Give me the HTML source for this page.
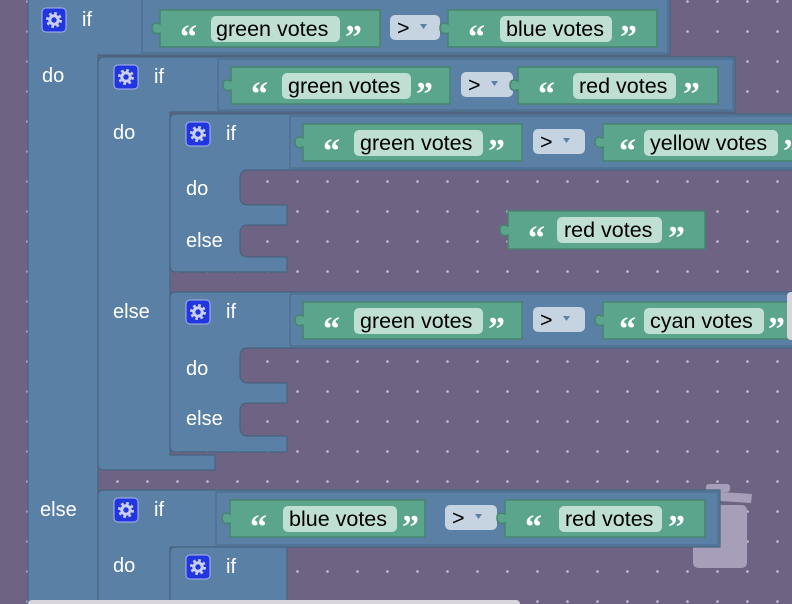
<!DOCTYPE html>
<html><head><meta charset="utf-8"><style>
html,body{margin:0;padding:0;background:#6e6382;overflow:hidden}
svg{display:block}
text{font-family:"Liberation Sans",sans-serif}
.lb{fill:#fff;font-size:20px}
.ft{fill:#000;font-size:21.5px}
.q{fill:#fff;font-size:34px;font-weight:bold;font-family:"Liberation Serif",serif}
</style></head><body>
<svg width="792" height="604" viewBox="0 0 792 604" xmlns="http://www.w3.org/2000/svg">
<defs>
<pattern id="dots" x="26" y="0" width="30" height="30" patternUnits="userSpaceOnUse">
<circle cx="1.5" cy="1.5" r="1.3" fill="#c9c1d4"/>
</pattern>
<g id="gear">
<rect x="0" y="0" width="24" height="24" rx="4" fill="#2236e0" stroke="#a9b6ee" stroke-width="1"/>
<circle cx="12" cy="12" r="6.5" fill="none" stroke="#c9d0f2" stroke-width="3" stroke-dasharray="2.6 2.5"/>
<circle cx="12" cy="12" r="4.2" fill="none" stroke="#c9d0f2" stroke-width="3"/>
</g>
</defs>
<rect width="792" height="604" fill="#6e6382"/>
<rect width="792" height="604" fill="url(#dots)"/>

<g fill="#a79fb9">
<path d="M690 490 L752 494 L751 503 L689 499 Z"/>
<rect x="706" y="484" width="24" height="8" rx="3"/>
<rect x="693" y="505" width="54" height="63" rx="5"/>
</g>

<g stroke="#46647f" stroke-width="1.2" fill="#5b80a5">
<path d="M28 -5 H670 V55 H98 V604 H28 Z"/>
<path d="M142 -2 H668 V53 H142 Z" fill="#5b80a5" stroke="#4c6d8e"/>
<path d="M104 57 H735 V112 H170 V455 H215 V470 H104 Q98 470 98 464 V63 Q98 57 104 57 Z"/>
<path d="M218 59 H733 V110 H218 Z" stroke="#4c6d8e"/>
<path d="M176 114 H800 V170 H248 Q240 170 240 178 V197 Q240 205 248 205 H287 V225 H248 Q240 225 240 233 V249 Q240 257 248 257 H287 V272 H176 Q170 272 170 266 V120 Q170 114 176 114 Z"/>
<path d="M290 116 H800 V168 H290 Z" stroke="#4c6d8e"/>
<path d="M176 292 H800 V348 H248 Q240 348 240 356 V375 Q240 383 248 383 H287 V403 H248 Q240 403 240 411 V428 Q240 436 248 436 H287 V452 H176 Q170 452 170 446 V298 Q170 292 176 292 Z"/>
<path d="M290 294 H800 V346 H290 Z" stroke="#4c6d8e"/>
<path d="M104 490 H720 V547 H170 V610 H98 V496 Q98 490 104 490 Z"/>
<path d="M216 492 H718 V545 H216 Z" stroke="#4c6d8e"/>
<path d="M176 547 H287 V610 H170 V553 Q170 547 176 547 Z"/>
</g>

<use href="#gear" x="42" y="8"/><text class="lb" x="82" y="26">if</text>
<text class="lb" x="42" y="82">do</text>
<text class="lb" x="40" y="516">else</text>
<use href="#gear" x="114" y="65"/><text class="lb" x="154" y="83">if</text>
<text class="lb" x="113" y="139">do</text>
<text class="lb" x="113" y="318">else</text>
<use href="#gear" x="186" y="122"/><text class="lb" x="226" y="140">if</text>
<text class="lb" x="186" y="195">do</text>
<text class="lb" x="186" y="247">else</text>
<use href="#gear" x="186" y="300"/><text class="lb" x="226" y="318">if</text>
<text class="lb" x="186" y="375">do</text>
<text class="lb" x="186" y="425">else</text>
<use href="#gear" x="114" y="498"/><text class="lb" x="154" y="516">if</text>
<text class="lb" x="113" y="572">do</text>
<use href="#gear" x="186" y="555"/><text class="lb" x="226" y="573">if</text>

<g>
<rect x="390" y="15" width="50" height="25" rx="5" fill="#c6d3e1"/><text class="ft" x="397" y="35">&gt;</text><path d="M420 24 h7 l-3.5 5z" fill="#5b80a5"/>
<rect x="461" y="72" width="52" height="25" rx="5" fill="#c6d3e1"/><text class="ft" x="468" y="92">&gt;</text><path d="M491 81 h7 l-3.5 5z" fill="#5b80a5"/>
<rect x="533" y="129" width="52" height="25" rx="5" fill="#c6d3e1"/><text class="ft" x="540" y="149">&gt;</text><path d="M563 138 h7 l-3.5 5z" fill="#5b80a5"/>
<rect x="533" y="307" width="52" height="25" rx="5" fill="#c6d3e1"/><text class="ft" x="540" y="327">&gt;</text><path d="M563 316 h7 l-3.5 5z" fill="#5b80a5"/>
<rect x="445" y="505" width="52" height="25" rx="5" fill="#c6d3e1"/><text class="ft" x="452" y="525">&gt;</text><path d="M475 514 h7 l-3.5 5z" fill="#5b80a5"/>
</g>

<g stroke="#47846f" stroke-width="1.5">
<path d="M160 10 H380 V47 H160 V33 Q152 35 152 28 Q152 21 160 24 Z" fill="#5ba58c"/>
<path d="M448 10 H657 V47 H448 V33 Q440 35 440 28 Q440 21 448 24 Z" fill="#5ba58c"/>
<path d="M231 67 H450 V104 H231 V90 Q223 92 223 85 Q223 78 231 81 Z" fill="#5ba58c"/>
<path d="M518 67 H718 V104 H518 V90 Q510 92 510 85 Q510 78 518 81 Z" fill="#5ba58c"/>
<path d="M303 124 H522 V161 H303 V147 Q295 149 295 142 Q295 135 303 138 Z" fill="#5ba58c"/>
<path d="M603 124 H800 V161 H603 V147 Q595 149 595 142 Q595 135 603 138 Z" fill="#5ba58c"/>
<path d="M508 211 H705 V249 H508 V235 Q500 237 500 230 Q500 223 508 226 Z" fill="#5ba58c"/>
<path d="M303 302 H522 V339 H303 V325 Q295 327 295 320 Q295 313 303 316 Z" fill="#5ba58c"/>
<path d="M603 302 H800 V339 H603 V325 Q595 327 595 320 Q595 313 603 316 Z" fill="#5ba58c"/>
<path d="M230 500 H425 V537 H230 V523 Q222 525 222 518 Q222 511 230 514 Z" fill="#5ba58c"/>
<path d="M505 500 H705 V537 H505 V523 Q497 525 497 518 Q497 511 505 514 Z" fill="#5ba58c"/>
</g>
<g fill="#c0dfd3">
<rect x="211" y="16" width="129" height="26" rx="5"/>
<rect x="500" y="16" width="112" height="26" rx="5"/>
<rect x="282" y="73" width="129" height="26" rx="5"/>
<rect x="573" y="73" width="103" height="26" rx="5"/>
<rect x="354" y="130" width="129" height="26" rx="5"/>
<rect x="644" y="130" width="134" height="26" rx="5"/>
<rect x="557" y="217" width="105" height="26" rx="5"/>
<rect x="354" y="308" width="129" height="26" rx="5"/>
<rect x="644" y="308" width="120" height="26" rx="5"/>
<rect x="283" y="506" width="114" height="26" rx="5"/>
<rect x="559" y="506" width="103" height="26" rx="5"/>
</g>
<g>
<text class="ft" x="216" y="36">green votes</text>
<text class="ft" x="506" y="36">blue votes</text>
<text class="ft" x="288" y="93">green votes</text>
<text class="ft" x="579" y="93">red votes</text>
<text class="ft" x="360" y="150">green votes</text>
<text class="ft" x="650" y="150">yellow votes</text>
<text class="ft" x="564" y="237">red votes</text>
<text class="ft" x="360" y="328">green votes</text>
<text class="ft" x="650" y="328">cyan votes</text>
<text class="ft" x="289" y="526">blue votes</text>
<text class="ft" x="565" y="526">red votes</text>
</g>
<g>
<text class="q" x="180" y="48">“</text><text class="q" x="345" y="48">”</text>
<text class="q" x="468" y="48">“</text><text class="q" x="620" y="48">”</text>
<text class="q" x="251" y="105">“</text><text class="q" x="416" y="105">”</text>
<text class="q" x="538" y="105">“</text><text class="q" x="683" y="105">”</text>
<text class="q" x="323" y="162">“</text><text class="q" x="488" y="162">”</text>
<text class="q" x="619" y="162">“</text><text class="q" x="783" y="162">”</text>
<text class="q" x="528" y="249">“</text><text class="q" x="668" y="249">”</text>
<text class="q" x="323" y="340">“</text><text class="q" x="488" y="340">”</text>
<text class="q" x="619" y="340">“</text><text class="q" x="768" y="340">”</text>
<text class="q" x="250" y="538">“</text><text class="q" x="402" y="538">”</text>
<text class="q" x="525" y="538">“</text><text class="q" x="668" y="538">”</text>
</g>

<rect x="787" y="292" width="8" height="48" rx="4" fill="#d8d6dc"/>
<rect x="28" y="600" width="492" height="8" rx="4" fill="#d8d6dc"/>
</svg>
</body></html>
